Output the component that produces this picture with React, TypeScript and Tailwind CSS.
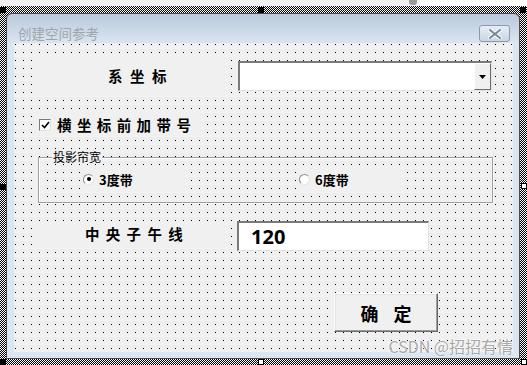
import React from "react";

const cjk = "font-['Noto_Sans_CJK_SC','Noto_Sans',sans-serif]";

function Handle({ cls, filled }: { cls: string; filled: boolean }) {
  return (
    <div
      className={`absolute w-[6px] h-[6px] ${filled ? "bg-black" : "bg-white border border-black"} ${cls}`}
    />
  );
}

export default function App() {
  return (
    <div className="w-[527px] h-[365px] flex flex-col bg-[#f0f0f0] overflow-hidden relative">
      <div className="h-[6px] bg-[#f0f0f0] relative">
        <div className="absolute left-[409px] top-0 w-[8px] h-[5px] bg-[#9a9a9a] rounded-b-[3px]" />
        <div className="absolute left-[420px] top-0 right-0 h-[6px] bg-white" />
      </div>
      <div className="flex-1 relative pl-[6px] pr-[7px] pt-[7px] pb-[6px] bg-[repeating-conic-gradient(#000_0_25%,#fff_0_50%)] bg-[length:2px_2px]">
        <Handle cls="left-0 top-[1px]" filled />
        <Handle cls="left-[258px] top-[1px]" filled />
        <Handle cls="right-[1px] top-[1px]" filled />
        <Handle cls="left-0 top-[178px]" filled />
        <Handle cls="right-0 top-[177px]" filled={false} />
        <Handle cls="left-0 bottom-0" filled />
        <Handle cls="left-[258px] bottom-0" filled={false} />
        <Handle cls="right-0 bottom-0" filled={false} />

        <div className="h-full flex flex-col border border-[#4a4a4a] rounded-t-[6px] bg-[linear-gradient(#b9c9db,#dbe6f3_30px,#dbe6f3)]">
          {/* title bar */}
          <div className="h-[29px] flex items-center justify-between pl-[11px] pr-[9px]">
            <span className={`${cjk} text-[13.5px] text-[#a0a4aa] pt-[10px] leading-none`}>创建空间参考</span>
            <div className="mt-[10px] w-[31px] h-[17px] rounded-[3px] border border-[#8d9aae] bg-[linear-gradient(#e6edf6,#c9d6e6)] flex items-center justify-center">
              <svg width="14" height="10" viewBox="0 0 14 10">
                <path d="M2 1 L12 9 M12 1 L2 9" stroke="#ffffff" strokeWidth="4" strokeLinecap="square" />
                <path d="M2 1 L12 9 M12 1 L2 9" stroke="#7c8796" strokeWidth="2" strokeLinecap="square" />
              </svg>
            </div>
          </div>
          {/* client area */}
          <div className="flex-1 ml-[7px] mr-[6px] mb-[6px] flex flex-col bg-black bg-[linear-gradient(90deg,transparent_1px,#f0f0f0_1px),linear-gradient(transparent_1px,#f0f0f0_1px)] bg-[length:8px_8px] bg-[position:1px_1px] relative">
            {/* row 1 */}
            <div className="mt-[18px] flex items-center h-[30px]">
              <div className="w-[224px] h-[30px] flex items-center">
                <div className="ml-[20px] w-[196px] h-[40px] bg-[#f0f0f0] flex items-center pl-[74px]">
                  <span className={`${cjk} text-[14.5px] font-bold tracking-[7.5px] text-black leading-none`}>系坐标</span>
                </div>
              </div>
              <div className="w-[254px] h-[30px] bg-white border-t-2 border-l-2 border-t-[#7a7a7a] border-l-[#7a7a7a] border-b border-r border-b-[#e3e3e3] border-r-[#e3e3e3] flex justify-end">
                <div className="w-[17px] h-full bg-[#f0f0f0] border-r border-b border-[#6e6e6e] border-t border-l border-t-white border-l-white flex items-center justify-center">
                  <svg width="7" height="4" viewBox="0 0 7 4">
                    <path d="M0 0 H7 L3.5 4 Z" fill="#000" />
                  </svg>
                </div>
              </div>
            </div>
            {/* checkbox row */}
            <div className="mt-[24px] ml-[23px] w-[170px] h-[20px] bg-[#f0f0f0] flex items-center">
              <div className="ml-[2px] w-[12px] h-[12px] bg-white border border-t-[#7a7a7a] border-l-[#7a7a7a] border-b-[#e0e0e0] border-r-[#e0e0e0] flex items-center justify-center">
                <svg width="9" height="8" viewBox="0 0 9 8">
                  <path d="M1 4 L3.5 6.5 L8 1" stroke="#000" strokeWidth="1.6" fill="none" />
                </svg>
              </div>
              <span className={`${cjk} ml-[6px] text-[14.5px] font-bold tracking-[5.4px] text-black leading-none`}>横坐标前加带号</span>
            </div>
            {/* group box */}
            <div className="mt-[22px] ml-[24px] w-[455px] h-[46px] border border-[#a0a0a0] shadow-[inset_1px_1px_0_#fff,1px_1px_0_#fff] relative flex items-center">
              <span className={`${cjk} absolute left-[13px] top-[-8px] px-[1px] bg-[#f0f0f0] text-[12px] text-black leading-[14px]`}>投影帘宽</span>
              <div className="ml-[42px] w-[110px] h-[20px] bg-[#f0f0f0] flex items-center mt-[-2px]">
                <div className="ml-[2px] w-[11px] h-[11px] rounded-full bg-white border border-t-[#8a8a8a] border-l-[#8a8a8a] border-b-[#e6e6e6] border-r-[#e6e6e6] flex items-center justify-center">
                  <div className="w-[4px] h-[4px] rounded-full bg-black" />
                </div>
                <span className={`${cjk} ml-[5px] text-[13px] font-bold text-black leading-none`}>3度带</span>
              </div>
              <div className="ml-[106px] w-[110px] h-[20px] bg-[#f0f0f0] flex items-center mt-[-2px]">
                <div className="ml-[2px] w-[11px] h-[11px] rounded-full bg-white border border-t-[#8a8a8a] border-l-[#8a8a8a] border-b-[#e6e6e6] border-r-[#e6e6e6]" />
                <span className={`${cjk} ml-[5px] text-[13px] font-bold text-black leading-none`}>6度带</span>
              </div>
            </div>
            {/* central meridian row */}
            <div className="mt-[18px] flex items-start h-[30px]">
              <div className="w-[223px] h-[30px] flex items-start">
                <div className="ml-[20px] w-[190px] h-[26px] bg-[#f0f0f0] flex items-center pl-[51px]">
                  <span className={`${cjk} text-[14.5px] font-bold tracking-[6.3px] text-black leading-none`}>中央子午线</span>
                </div>
              </div>
              <div className="w-[192px] h-[30px] bg-white border-t-2 border-l-2 border-t-[#7a7a7a] border-l-[#7a7a7a] border-b border-r border-b-[#e3e3e3] border-r-[#e3e3e3] flex items-center pl-[12px]">
                <span className="font-['Noto_Sans',sans-serif] text-[20px] font-bold text-black leading-none">120</span>
              </div>
            </div>
            {/* button */}
            <div className="mt-[42px] ml-[320px] w-[104px] h-[39px] bg-[#f0f0f0] border border-t-white border-l-white border-b-[#696969] border-r-[#696969] shadow-[inset_-1px_-1px_0_#a0a0a0,inset_1px_1px_0_#e3e3e3] flex items-center justify-center">
              <span className={`${cjk} text-[18px] font-bold text-black tracking-[15px] pl-[15px] leading-none`}>确定</span>
            </div>
            <span className={`${cjk} absolute right-[0px] bottom-[-2px] text-[16px] text-[#a9a9a9] leading-none [text-shadow:0_0_2px_#fff,0_0_1px_#fff]`}>CSDN @招招有情</span>
          </div>
        </div>
      </div>
    </div>
  );
}
